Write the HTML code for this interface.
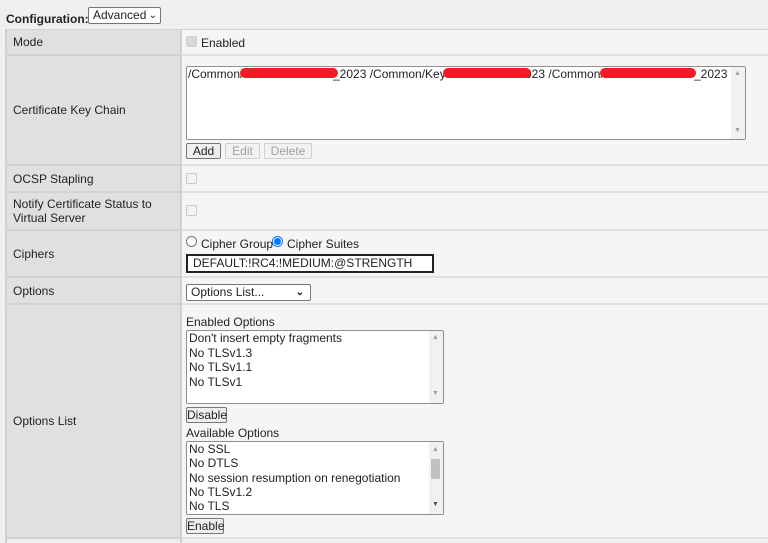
<!DOCTYPE html>
<html><head><style>
body{margin:0;width:768px;height:543px;background:#f0efed;font-family:"Liberation Sans",Arial,sans-serif;font-size:12px;color:#222;position:relative;overflow:hidden}
.a{position:absolute;white-space:nowrap}
.lab{position:absolute;left:7px;width:173px;background:#e1e0de;border-bottom:2px solid #d2d1cf;box-sizing:border-box;padding-left:6px;display:flex;align-items:center;line-height:14px}
.val{position:absolute;left:182px;right:0;background:#f6f5f4;border-bottom:2px solid #e2e1df;box-sizing:border-box}
.btn{position:absolute;height:16px;border:1px solid #767676;border-radius:2px;background:#efefef;font-size:12px;line-height:15px;text-align:center;box-sizing:border-box}
.dis{border-color:#cfcfcf;color:#a0a0a0;background:#f2f2f2}
.box{position:absolute;background:#fff;border:1px solid #8f8f8f;border-radius:2px;box-sizing:border-box}
.sb{position:absolute;right:0;top:0;bottom:0;width:14px;background:#f1f1f1}
.cb{position:absolute;width:11px;height:11px;border:1px solid #c9c9c9;border-radius:2px;background:#f3f3f3;box-sizing:border-box}
.red{position:absolute;background:#ee1c25;border-radius:7px;height:10px}
</style></head><body>
<div class="a" style="left:6px;top:12px;font-weight:bold;font-size:12px">Configuration:</div>
<div class="a" style="left:88px;top:7px;width:73px;height:17px;border:1px solid #767676;background:#fff;box-sizing:border-box;border-radius:2px;padding-left:4px;line-height:15px">Advanced <span style="position:absolute;right:3px;top:0;font-size:10px">&#8964;</span></div>
<div class="a" style="left:5px;top:29px;width:2px;height:514px;background:#d2d1cf"></div>
<div class="a" style="left:7px;top:29px;width:761px;height:1px;background:#d2d1cf"></div>
<div class="a" style="left:180px;top:29px;width:2px;height:514px;background:#d2d1cf"></div>

<div class="lab" style="top:30px;height:26px">Mode</div>
<div class="val" style="top:30px;height:26px"></div>
<div class="cb" style="left:186px;top:36px;background:#d9d9d9;border-color:#d0d0d0"></div>
<div class="a" style="left:201px;top:36px">Enabled</div>

<div class="lab" style="top:56px;height:110px">Certificate Key Chain</div>
<div class="val" style="top:56px;height:110px"></div>
<div class="box" style="left:186px;top:66px;width:560px;height:74px"><div class="sb"></div></div>
<div class="a" style="left:188px;top:67px">/Common/</div>
<div class="a" style="left:333px;top:67px">_2023 /Common/Key</div>
<div class="a" style="left:525px;top:67px">023 /Common/</div>
<div class="a" style="left:694px;top:67px">_2023</div>
<div class="red" style="left:240px;top:68px;width:98px"></div>
<div class="red" style="left:443px;top:68px;width:88px"></div>
<div class="red" style="left:600px;top:68px;width:96px"></div>
<div class="a" style="left:734px;top:70px;font-size:7px;color:#a0a0a0">&#9650;</div>
<div class="a" style="left:734px;top:127px;font-size:7px;color:#a0a0a0">&#9660;</div>
<div class="btn" style="left:186px;top:143px;width:35px">Add</div>
<div class="btn dis" style="left:225px;top:143px;width:35px">Edit</div>
<div class="btn dis" style="left:264px;top:143px;width:48px">Delete</div>

<div class="lab" style="top:166px;height:27px">OCSP Stapling</div>
<div class="val" style="top:166px;height:27px"></div>
<div class="cb" style="left:186px;top:173px"></div>

<div class="lab" style="top:193px;height:38px">Notify Certificate Status to Virtual Server</div>
<div class="val" style="top:193px;height:38px"></div>
<div class="cb" style="left:186px;top:205px"></div>

<div class="lab" style="top:231px;height:47px">Ciphers</div>
<div class="val" style="top:231px;height:47px"></div>
<div class="a" style="left:186px;top:236px;width:11px;height:11px;border:1px solid #767676;border-radius:50%;background:#fff;box-sizing:border-box"></div>
<div class="a" style="left:201px;top:237px">Cipher Group</div>
<div class="a" style="left:272px;top:236px;width:11px;height:11px;border:1px solid #0075ff;border-radius:50%;background:#fff;box-sizing:border-box"><div class="a" style="left:1px;top:1px;width:7px;height:7px;border-radius:50%;background:#0075ff"></div></div>
<div class="a" style="left:287px;top:237px">Cipher Suites</div>
<div class="a" style="left:186px;top:254px;width:248px;height:19px;border:2px solid #222;background:#fff;box-sizing:border-box;padding-left:5px;line-height:15px">DEFAULT:!RC4:!MEDIUM:@STRENGTH</div>

<div class="lab" style="top:278px;height:27px">Options</div>
<div class="val" style="top:278px;height:27px"></div>
<div class="a" style="left:186px;top:284px;width:125px;height:17px;border:1px solid #767676;background:#fff;box-sizing:border-box;border-radius:2px;padding-left:4px;line-height:15px">Options List... <span style="position:absolute;right:6px;top:0;font-size:10px;font-weight:bold">&#8964;</span></div>

<div class="lab" style="top:305px;height:234px">Options List</div>
<div class="val" style="top:305px;height:234px"></div>
<div class="a" style="left:186px;top:315px">Enabled Options</div>
<div class="box" style="left:186px;top:330px;width:258px;height:74px"><div class="sb"></div>
<div class="a" style="left:2px;top:0;line-height:14.5px">Don't insert empty fragments<br>No TLSv1.3<br>No TLSv1.1<br>No TLSv1</div></div>
<div class="a" style="left:432px;top:334px;font-size:7px;color:#a0a0a0">&#9650;</div>
<div class="a" style="left:432px;top:390px;font-size:7px;color:#a0a0a0">&#9660;</div>
<div class="btn" style="left:186px;top:407px;width:41px">Disable</div>
<div class="a" style="left:186px;top:426px">Available Options</div>
<div class="box" style="left:186px;top:441px;width:258px;height:74px"><div class="sb"></div>
<div class="a" style="right:3px;top:17px;width:9px;height:20px;background:#c1c1c1"></div>
<div class="a" style="left:2px;top:0;line-height:14.3px">No SSL<br>No DTLS<br>No session resumption on renegotiation<br>No TLSv1.2<br>No TLS</div></div>
<div class="a" style="left:432px;top:446px;font-size:7px;color:#a0a0a0">&#9650;</div>
<div class="a" style="left:432px;top:501px;font-size:7px;color:#505050">&#9660;</div>
<div class="btn" style="left:186px;top:518px;width:38px">Enable</div>
</body></html>
